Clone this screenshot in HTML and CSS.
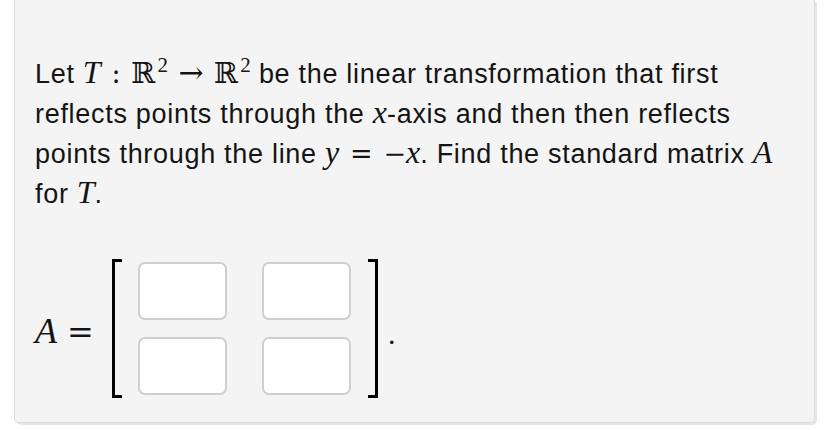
FILE: index.html
```html
<!DOCTYPE html>
<html>
<head>
<meta charset="utf-8">
<link rel="stylesheet" href="styles.css">
</head>
<body>
<div class="card">
  <p class="question">Let <span class="i">T</span><span class="m op">:</span><span class="m bb">ℝ<sup>2</sup></span><span class="m op arrow">→</span><span class="m bb">ℝ<sup>2</sup></span> be the linear transformation that first<br>reflects points through the <span class="i">x</span>-axis and then then reflects<br>points through the line <span class="i">y</span><span class="m op">=</span><span class="m">−</span><span class="i">x</span>. Find the standard matrix <span class="i">A</span><br>for <span class="i">T</span>.</p>
  <div class="answer">
    <span class="lhs"><span class="i">A</span><span class="eq">=</span></span>
    <span class="bracket left"></span>
    <div class="grid">
      <input class="cell" type="text">
      <input class="cell" type="text">
      <input class="cell" type="text">
      <input class="cell" type="text">
    </div>
    <span class="bracket right"></span>
    <span class="dot">.</span>
  </div>
</div>
</body>
</html>
```
FILE: styles.css
```css
html, body {
  margin: 0;
  padding: 0;
  background: #ffffff;
}
body {
  width: 828px;
  height: 430px;
  overflow: hidden;
}
.card {
  margin-left: 14px;
  width: 759px;
  background: #f4f4f4;
  border: 1px solid #dcdcdc;
  border-top: none;
  border-radius: 0 0 5px 5px;
  box-shadow: 2px 2px 0 #e6e6e6;
  padding: 54px 20px 24px 20px;
  color: #141414;
  font-family: "Liberation Sans", Arial, sans-serif;
}
.question {
  margin: 0;
  font-size: 27px;
  letter-spacing: 0.7px;
  line-height: 40px;
  white-space: nowrap;
}
.question .m,
.question .i {
  line-height: 0;
}
.m {
  font-family: "DejaVu Serif", "Liberation Serif", serif;
  font-size: 27px;
  letter-spacing: 0;
}
.op {
  margin: 0 0.4em;
}
.arrow {
  font-size: 30px;
  margin: 0 0.35em;
}
.bb {
  font-size: 29px;
}
.i {
  font-family: "Liberation Serif", serif;
  font-style: italic;
  font-size: 32px;
  letter-spacing: 0;
}
sup {
  font-family: "Liberation Serif", serif;
  font-size: 21px;
  line-height: 0;
  margin-left: 2px;
}
.answer {
  margin-top: 45px;
  display: flex;
  align-items: center;
  height: 139px;
}
.lhs {
  font-family: "Liberation Serif", serif;
  font-size: 34px;
  width: 77px;
  display: flex;
  align-items: baseline;
  margin-top: 4px;
}
.lhs .i {
  font-size: 36px;
}
.eq {
  margin-left: 10px;
  font-family: "DejaVu Serif", serif;
  font-size: 32px;
}
.bracket {
  display: block;
  width: 7px;
  height: 133px;
  border: 3px solid #000;
}
.bracket.left {
  border-right: none;
}
.bracket.right {
  border-left: none;
}
.grid {
  display: grid;
  grid-template-columns: 89px 89px;
  grid-template-rows: 58px 58px;
  column-gap: 35px;
  row-gap: 17px;
  margin: 0 17px 0 16px;
}
.cell {
  box-sizing: border-box;
  width: 89px;
  height: 58px;
  margin: 0;
  padding: 0;
  background: #ffffff;
  border: 2px solid #cfcfcf;
  border-radius: 7px;
  outline: none;
}
.dot {
  font-family: "Liberation Serif", serif;
  font-size: 30px;
  margin-left: 10px;
  margin-top: 10px;
}
```
